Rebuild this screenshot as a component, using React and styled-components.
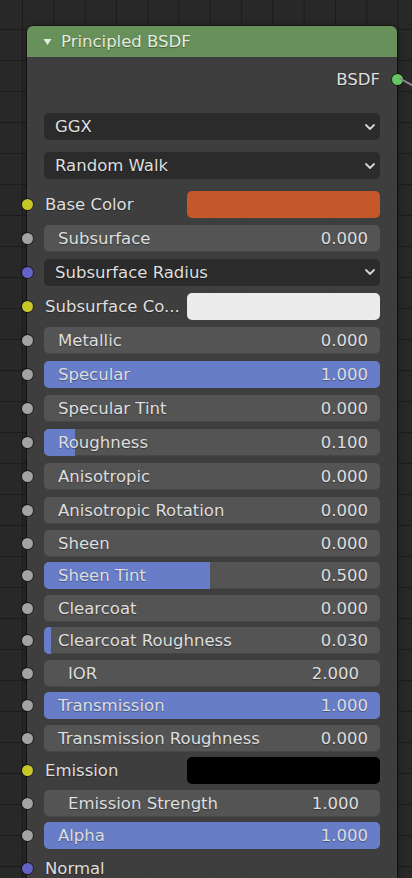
import React from 'react';
import styled, { createGlobalStyle } from 'styled-components';

const GlobalStyle = createGlobalStyle`
  html, body {
    margin: 0;
    padding: 0;
    background: #272727;
  }
  body {
    font-family: 'DejaVu Sans', 'Liberation Sans', sans-serif;
  }
`;

const Canvas = styled.div`
  position: relative;
  width: 412px;
  height: 878px;
  overflow: hidden;
  box-sizing: border-box;
  padding: 26px 0 0 27px;
  background-color: #282828;
  background-image:
    linear-gradient(to right, #1c1c1c 0 1px, transparent 1px),
    linear-gradient(to bottom, #1c1c1c 0 1px, transparent 1px);
  background-size: 31.3px 31px;
  background-position: 22px 29px;
`;

const Node = styled.div`
  width: 370px;
  min-height: 900px;
  background: rgba(64, 64, 64, 0.94);
  border-radius: 6px 6px 0 0;
  box-shadow: 0 0 0 1px rgba(0, 0, 0, 0.35), 0 0 6px rgba(0, 0, 0, 0.35);
  color: #dedede;
  font-size: 16.5px;
  text-shadow: 0 1px 1px rgba(0, 0, 0, 0.35);
`;

const Header = styled.div`
  height: 31px;
  display: flex;
  align-items: center;
  gap: 9px;
  padding-left: 16px;
  background: #67905a;
  border-radius: 6px 6px 0 0;
  color: #e4ecdf;
`;

const Row = styled.div`
  position: relative;
  box-sizing: border-box;
  height: ${({ $h }) => $h}px;
  margin-top: ${({ $mt }) => $mt || 0}px;
  padding: 0 17px;
  display: flex;
  align-items: center;
  justify-content: ${({ $end }) => ($end ? 'flex-end' : 'flex-start')};
`;

const Socket = styled.span`
  position: absolute;
  top: 50%;
  ${({ $right }) => ($right ? 'right: -5.5px;' : 'left: -5.5px;')}
  width: 11px;
  height: 11px;
  margin-top: -5.5px;
  border-radius: 50%;
  background: ${({ $c }) => $c};
  box-shadow: 0 0 0 1px rgba(0, 0, 0, 0.45);
`;

const Wire = styled.svg`
  position: absolute;
  top: 50%;
  right: -20px;
  margin-top: -2px;
`;

const OutLabel = styled.span`
  margin-right: 0;
`;

const ValueField = styled.div`
  position: relative;
  flex: 1;
  height: 27px;
  border-radius: 5px;
  overflow: hidden;
  background: #545454;
  display: flex;
  align-items: center;
  justify-content: space-between;
  padding: 0 ${({ $indent }) => ($indent ? '21px 0 24px' : '12px 0 14px')};
  box-sizing: border-box;
  box-shadow: inset 0 -1px 0 rgba(0, 0, 0, 0.15);
`;

const Fill = styled.div`
  position: absolute;
  left: 0;
  top: 0;
  bottom: 0;
  background: #687dc8;
`;

const FieldText = styled.span`
  position: relative;
  white-space: nowrap;
`;

const MenuField = styled.div`
  flex: 1;
  height: 27px;
  border-radius: 5px;
  background: #2b2b2b;
  display: flex;
  align-items: center;
  justify-content: space-between;
  padding: 0 3px 0 11px;
  box-sizing: border-box;
`;

const ColorLabel = styled.span`
  width: 142px;
  padding-left: 1px;
  white-space: nowrap;
  overflow: hidden;
`;

const Swatch = styled.div`
  flex: 1;
  height: 27px;
  border-radius: 5px;
  background: ${({ $c }) => $c};
`;

const PlainLabel = styled.span`
  padding-left: 1px;
`;

const SOCK = {
  yellow: '#c7c729',
  gray: '#a3a3a3',
  purple: '#6363c7',
  green: '#63c763',
};

const rows = [
  { type: 'color', label: 'Base Color', socket: 'yellow', color: '#c4582a' },
  { type: 'value', label: 'Subsurface', value: '0.000', fill: 0 },
  { type: 'menu', label: 'Subsurface Radius', socket: 'purple' },
  { type: 'color', label: 'Subsurface Co...', socket: 'yellow', color: '#ececec' },
  { type: 'value', label: 'Metallic', value: '0.000', fill: 0 },
  { type: 'value', label: 'Specular', value: '1.000', fill: 1 },
  { type: 'value', label: 'Specular Tint', value: '0.000', fill: 0 },
  { type: 'value', label: 'Roughness', value: '0.100', fill: 0.092 },
  { type: 'value', label: 'Anisotropic', value: '0.000', fill: 0 },
  { type: 'value', label: 'Anisotropic Rotation', value: '0.000', fill: 0 },
  { type: 'value', label: 'Sheen', value: '0.000', fill: 0 },
  { type: 'value', label: 'Sheen Tint', value: '0.500', fill: 0.494 },
  { type: 'value', label: 'Clearcoat', value: '0.000', fill: 0 },
  { type: 'value', label: 'Clearcoat Roughness', value: '0.030', fill: 0.02 },
  { type: 'value', label: 'IOR', value: '2.000', fill: 0, indent: true },
  { type: 'value', label: 'Transmission', value: '1.000', fill: 1 },
  { type: 'value', label: 'Transmission Roughness', value: '0.000', fill: 0 },
  { type: 'color', label: 'Emission', socket: 'yellow', color: '#000000' },
  { type: 'value', label: 'Emission Strength', value: '1.000', fill: 0, indent: true },
  { type: 'value', label: 'Alpha', value: '1.000', fill: 1 },
  { type: 'plain', label: 'Normal', socket: 'purple' },
];

const Chevron = () => (
  <svg width="14" height="10" viewBox="0 0 14 10">
    <path d="M3 3 L7 7 L11 3" fill="none" stroke="#d6d6d6" strokeWidth="1.8" strokeLinecap="round" strokeLinejoin="round" />
  </svg>
);

const Collapse = () => (
  <svg width="9" height="8" viewBox="0 0 9 8">
    <polygon points="0.5,1 8.5,1 4.5,7" fill="#e4ecdf" />
  </svg>
);

const Menu = ({ label }) => (
  <MenuField>
    <span>{label}</span>
    <Chevron />
  </MenuField>
);

const Input = ({ row }) => {
  switch (row.type) {
    case 'color':
      return (
        <>
          <ColorLabel>{row.label}</ColorLabel>
          <Swatch $c={row.color} />
        </>
      );
    case 'menu':
      return <Menu label={row.label} />;
    case 'plain':
      return <PlainLabel>{row.label}</PlainLabel>;
    default:
      return (
        <ValueField $indent={row.indent}>
          {row.fill > 0 && <Fill style={{ width: `${row.fill * 100}%`, minWidth: 6 }} />}
          <FieldText>{row.label}</FieldText>
          <FieldText>{row.value}</FieldText>
        </ValueField>
      );
  }
};

export default function App() {
  return (
    <>
      <GlobalStyle />
      <Canvas>
        <Node>
          <Header>
            <Collapse />
            <span>Principled BSDF</span>
          </Header>
          <Row $h={44} $end>
            <OutLabel>BSDF</OutLabel>
            <Socket $c={SOCK.green} $right />
            <Wire width="20" height="14" viewBox="0 0 20 14">
              <path d="M2 1 L20 11" stroke="#8a8a8a" strokeWidth="2" fill="none" />
            </Wire>
          </Row>
          <Row $h={27} $mt={12}>
            <Menu label="GGX" />
          </Row>
          <Row $h={27} $mt={12}>
            <Menu label="Random Walk" />
          </Row>
          <div style={{ height: 8 }} />
          {rows.map((row, i) => (
            <Row key={row.label} $h={i < 10 ? 34 : 32.5}>
              <Socket $c={SOCK[row.socket || 'gray']} />
              <Input row={row} />
            </Row>
          ))}
        </Node>
      </Canvas>
    </>
  );
}
